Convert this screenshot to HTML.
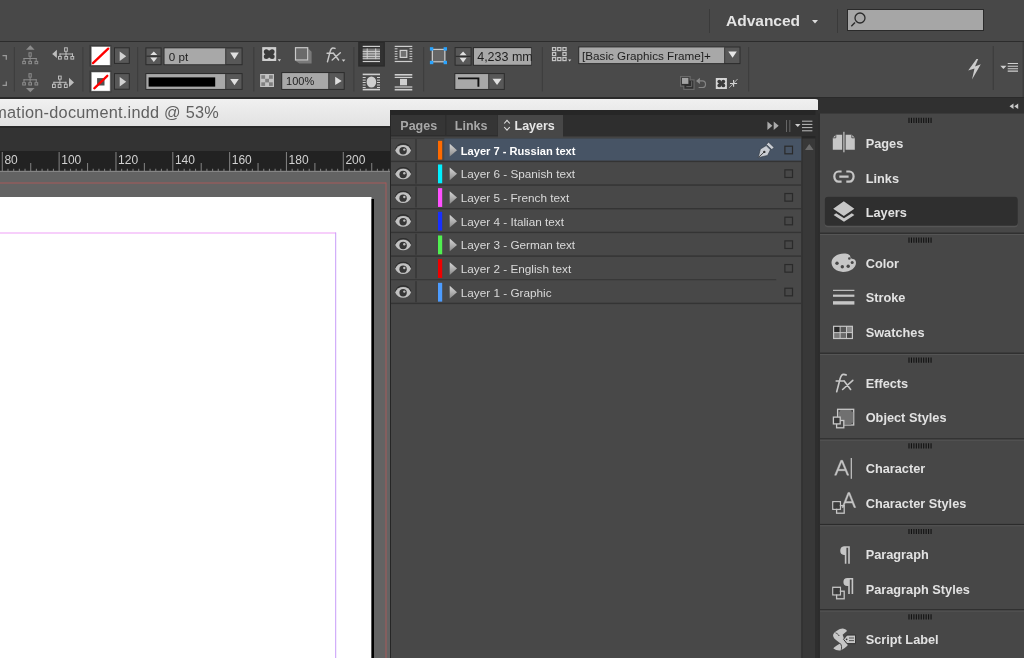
<!DOCTYPE html>
<html><head><meta charset="utf-8">
<style>
*{margin:0;padding:0}
html,body{width:1024px;height:658px;overflow:hidden;background:#484848}
svg{display:block;font-family:"Liberation Sans",sans-serif;will-change:transform}
</style></head><body>
<svg width="1024" height="658" viewBox="0 0 1024 658">
<defs>
<linearGradient id="tabg" x1="0" y1="0" x2="0" y2="1"><stop offset="0" stop-color="#f0f0f0"/><stop offset="1" stop-color="#e2e2e2"/></linearGradient>
<linearGradient id="trig" x1="0" y1="0" x2="0" y2="1"><stop offset="0" stop-color="#d8d8d8"/><stop offset="1" stop-color="#8a8a8a"/></linearGradient>
<g id="eye"><path d="M395.5 -0.8C398 -8.2 408.4 -8.2 410.8 -0.8" fill="none" stroke="#2c2c2c" stroke-width="1.1"/><path d="M395.2 0.2C398 -7 408.4 -7 411 0.2C408.4 7.2 398 7.2 395.2 0.2z" fill="#c2c2c2"/><circle cx="403.1" cy="0.6" r="3.7" fill="#363636"/><circle cx="404.3" cy="-0.6" r="1.2" fill="#bdbdbd"/></g></defs>
<g id="top">
<rect x="0" y="0" width="1024" height="41" fill="#484848"/>
<rect x="709" y="9" width="1" height="24" fill="#3a3a3a"/>
<text x="726" y="26" font-size="15.5" font-weight="bold" fill="#e4e4e4">Advanced</text>
<path d="M812 20h6l-3 3.5z" fill="#dcdcdc"/>
<rect x="837" y="9" width="1" height="24" fill="#3a3a3a"/>
<rect x="847.5" y="9.5" width="136" height="21" fill="#a6a6a6" stroke="#2a2a2a"/>
<circle cx="860" cy="18" r="5" fill="none" stroke="#2a2a2a" stroke-width="1.3"/>
<path d="M855 22.5L851.3 26.3" stroke="#2a2a2a" stroke-width="1.4"/>
<rect x="0" y="41" width="1024" height="1" fill="#2c2c2c"/>
</g>
<g id="tool">
<rect x="0" y="42" width="1024" height="55" fill="#4a4a4a"/>
<rect x="0" y="97" width="1024" height="2" fill="#2a2a2a"/>
<rect x="1022.5" y="42" width="1.5" height="55" fill="#3c3c3c"/>
<!-- separators -->
<g fill="#3e3e3e">
<rect x="13.8" y="47" width="1.2" height="44.5"/>
<rect x="82.3" y="47" width="1.2" height="44.5"/>
<rect x="137" y="47" width="1.2" height="44.5"/>
<rect x="253.2" y="47" width="1.2" height="44.5"/>
<rect x="353.3" y="47" width="1.2" height="44.5"/>
<rect x="423" y="47" width="1.2" height="44.5"/>
<rect x="541.8" y="47" width="1.2" height="44.5"/>
<rect x="748" y="47" width="1.2" height="44.5"/>
<rect x="992.7" y="46" width="1.2" height="44"/>
</g>
<!-- corner marks -->
<path d="M2.5 55.6h3.8v4.2M2.5 85.4h3.8v-4" fill="none" stroke="#9a9a9a" stroke-width="1.3"/>
<!-- hierarchy icon 1 (dim) -->
<g fill="#8c8c8c">
<path d="M26 49.8l4.3-4.5 4.3 4.5z"/>
<rect x="28.5" y="52.3" width="3.2" height="4.5"/>
<rect x="29.6" y="56.8" width="1" height="2"/>
<rect x="23.5" y="58" width="13.2" height="1"/>
<rect x="23.5" y="58" width="1" height="3"/><rect x="29.6" y="58" width="1" height="3"/><rect x="35.7" y="58" width="1" height="3"/>
<rect x="22.2" y="60.9" width="3.7" height="3.3"/><rect x="28.3" y="60.9" width="3.7" height="3.3"/><rect x="34.5" y="60.9" width="3.7" height="3.3"/>
<!-- icon 3 -->
<rect x="28.5" y="73.2" width="3.2" height="4.5"/>
<rect x="29.6" y="77.7" width="1" height="2"/>
<rect x="23.5" y="79.3" width="13.2" height="1"/>
<rect x="23.5" y="79.3" width="1" height="3"/><rect x="29.6" y="79.3" width="1" height="3"/><rect x="35.7" y="79.3" width="1" height="3"/>
<rect x="22.2" y="82.2" width="3.7" height="3.3"/><rect x="28.3" y="82.2" width="3.7" height="3.3"/><rect x="34.5" y="82.2" width="3.7" height="3.3"/>
<path d="M26 88l4.3 4.2 4.3-4.2z"/>
</g>
<g fill="#bdbdbd">
<path d="M52.2 53.9l4.7-4.1v8.2z"/>
<rect x="64.1" y="47.3" width="3.7" height="4.5"/>
<rect x="65.5" y="51.8" width="1" height="2"/>
<rect x="59.5" y="53.5" width="13.5" height="1"/>
<rect x="59.5" y="53.5" width="1" height="3"/><rect x="65.5" y="53.5" width="1" height="3"/><rect x="72" y="53.5" width="1" height="3"/>
<rect x="58" y="56" width="3.8" height="3.6"/><rect x="64.3" y="56" width="3.8" height="3.6"/><rect x="70.4" y="56" width="3.8" height="3.6"/>
<rect x="58" y="75.6" width="3.7" height="4.1"/>
<rect x="59.4" y="79.7" width="1" height="2"/>
<rect x="53.4" y="81.8" width="13" height="1"/>
<rect x="53.4" y="81.8" width="1" height="3"/><rect x="59.4" y="81.8" width="1" height="3"/><rect x="65.4" y="81.8" width="1" height="3"/>
<rect x="52" y="83.8" width="3.8" height="4.2"/><rect x="57.7" y="83.8" width="3.8" height="4.2"/><rect x="63.9" y="83.8" width="3.8" height="4.2"/>
<path d="M69 77.7l5 4.7-5 4.7z"/>
</g>
<g><rect x="29.50" y="53.30" width="1.20" height="2.50" fill="#4a4a4a"/><rect x="23.20" y="61.90" width="1.70" height="1.30" fill="#4a4a4a"/><rect x="29.30" y="61.90" width="1.70" height="1.30" fill="#4a4a4a"/><rect x="35.50" y="61.90" width="1.70" height="1.30" fill="#4a4a4a"/><rect x="29.50" y="74.20" width="1.20" height="2.50" fill="#4a4a4a"/><rect x="23.20" y="83.20" width="1.70" height="1.30" fill="#4a4a4a"/><rect x="29.30" y="83.20" width="1.70" height="1.30" fill="#4a4a4a"/><rect x="35.50" y="83.20" width="1.70" height="1.30" fill="#4a4a4a"/><rect x="65.10" y="48.30" width="1.70" height="2.50" fill="#4a4a4a"/><rect x="59.00" y="57.00" width="1.80" height="1.60" fill="#4a4a4a"/><rect x="65.30" y="57.00" width="1.80" height="1.60" fill="#4a4a4a"/><rect x="71.40" y="57.00" width="1.80" height="1.60" fill="#4a4a4a"/><rect x="59.00" y="76.60" width="1.70" height="2.10" fill="#4a4a4a"/><rect x="53.00" y="84.80" width="1.80" height="2.20" fill="#4a4a4a"/><rect x="58.70" y="84.80" width="1.80" height="2.20" fill="#4a4a4a"/><rect x="64.90" y="84.80" width="1.80" height="2.20" fill="#4a4a4a"/></g>
<!-- fill / stroke swatches -->
<rect x="89.3" y="44.9" width="22.2" height="21.7" fill="#3c3c3c"/>
<rect x="91" y="46.4" width="19.5" height="19" fill="#8a8a8a"/>
<rect x="91.8" y="46.9" width="18" height="18.1" fill="#fff"/>
<path d="M93 63.2L108.2 48.6" stroke="#f00" stroke-width="2.3" stroke-linecap="round"/>
<rect x="89.3" y="70.5" width="22.2" height="22" fill="#3c3c3c"/>
<rect x="91" y="71.9" width="19.5" height="19.4" fill="#8a8a8a"/>
<rect x="91.8" y="72.4" width="18" height="18.4" fill="#fff"/>
<rect x="97.1" y="78.1" width="7.4" height="7.4" fill="#505050"/>
<path d="M94.3 88.3L107.3 75.8" stroke="#f00" stroke-width="2.3" stroke-linecap="round"/>
<g>
<rect x="114.5" y="47.8" width="14.8" height="15.6" fill="#585858" stroke="#2c2c2c" stroke-width="1"/>
<path d="M119.7 51.4l6.5 4.75-6.5 4.75z" fill="#d2d2d2"/>
<rect x="114.5" y="73.6" width="14.8" height="15.6" fill="#585858" stroke="#2c2c2c" stroke-width="1"/>
<path d="M119.7 77.1l6.5 4.75-6.5 4.75z" fill="#d2d2d2"/>
</g>
<!-- stroke weight spinner + field -->
<rect x="145.9" y="47.9" width="15.2" height="16.8" fill="#585858" stroke="#2c2c2c"/>
<rect x="146.4" y="55.6" width="14.2" height="1.2" fill="#2e2e2e"/>
<path d="M150.3 55l3.5-3.5 3.5 3.5zM150.3 57.6l3.5 4.5 3.5-4.5z" fill="#e0e0e0"/>
<rect x="164.1" y="47.9" width="78" height="16.8" fill="#585858" stroke="#2c2c2c"/>
<rect x="164.6" y="48.4" width="60.6" height="15.8" fill="#a8a8a8"/>
<rect x="225.2" y="48.4" width="1.2" height="15.8" fill="#444"/>
<path d="M230.2 52.4h8.6l-4.3 6.8z" fill="#e0e0e0"/>
<text x="168.8" y="60.8" font-size="11.6" fill="#1e1e1e">0 pt</text>
<rect x="145.9" y="73.6" width="96.2" height="15.8" fill="#585858" stroke="#2c2c2c"/>
<rect x="146.4" y="74.1" width="78.8" height="14.8" fill="#a8a8a8"/>
<rect x="148.6" y="77.4" width="66.6" height="9.2" fill="#000"/>
<rect x="225.2" y="74.1" width="1.2" height="14.8" fill="#444"/>
<path d="M230.2 79h8.6l-4.3 6.3z" fill="#e0e0e0"/>
<!-- corner options / drop shadow / fx -->
<rect x="262.2" y="47.1" width="14" height="13.9" fill="#cfcfcf"/>
<g fill="#3a3a3a"><circle cx="266.3" cy="51.7" r="2.5"/><circle cx="272.1" cy="51.7" r="2.5"/><circle cx="266.3" cy="56.5" r="2.5"/><circle cx="272.1" cy="56.5" r="2.5"/><rect x="265.5" y="50.5" width="7.4" height="7.2"/></g>
<path d="M277.7 59.2h3.3l-1.65 2.3z" fill="#cfcfcf"/>
<path d="M308.3 48.5l3.3 3.3v11.7h-12.2l-4.5-2.9h13.4z" fill="#8a8a8a" opacity="0.75"/>
<rect x="294.9" y="47.1" width="13.4" height="13.5" fill="#cacaca"/>
<rect x="296.1" y="48.3" width="11" height="11.1" fill="#6a6a6a"/>
<g transform="translate(326.9 47.6) scale(0.8) translate(-836 -374)"><path d="M836.7 391.7C838 387 839 383 840 379C841 375.5 842 374.4 843.5 374.4C844.8 374.4 845.6 374.6 846.2 375M836.2 381H843.2M842.6 389.5L852.8 380.4M844 380.8L850.6 389.5" fill="none" stroke="#c8c8c8" stroke-width="1.8" stroke-linecap="round"/></g>
<path d="M341.7 59.6h3.7l-1.85 2.1z" fill="#cfcfcf"/>
<!-- transparency -->
<rect x="260.1" y="74" width="13.9" height="13" fill="#c2c2c2"/>
<g fill="#808080"><rect x="261.3" y="75.2" width="3.8" height="3.6"/><rect x="269" y="75.2" width="3.8" height="3.6"/><rect x="265.2" y="78.8" width="3.8" height="3.6"/><rect x="261.3" y="82.3" width="3.8" height="3.6"/><rect x="269" y="82.3" width="3.8" height="3.6"/></g>
<rect x="281.8" y="72.6" width="62.4" height="16.8" fill="#585858" stroke="#2c2c2c"/>
<rect x="282.3" y="73.1" width="46" height="15.8" fill="#a8a8a8"/>
<rect x="328.3" y="73.1" width="1.2" height="15.8" fill="#444"/>
<path d="M335.2 76.8l6.5 4.15-6.5 4.15z" fill="#e0e0e0"/>
<text x="286.1" y="85.1" font-size="11" fill="#1e1e1e">100%</text>
<!-- text wrap buttons -->
<rect x="358.2" y="42" width="26.7" height="24.6" fill="#2b2b2b"/>
<rect x="359.5" y="43" width="24.2" height="22.3" fill="#313131"/>
<g fill="#cfcfcf">
<rect x="362.7" y="45.8" width="17.3" height="1.2"/>
<rect x="362.7" y="60.9" width="17.3" height="1.2"/>
<rect x="362.7" y="48.5" width="17.3" height="10.6" fill="#7a7a7a"/>
<rect x="362.7" y="50.9" width="17.3" height="1"/><rect x="362.7" y="53.4" width="17.3" height="1"/><rect x="362.7" y="55.9" width="17.3" height="1"/><rect x="362.7" y="58.3" width="17.3" height="1"/>
<rect x="366.7" y="48.5" width="1" height="10.6"/><rect x="375.2" y="48.5" width="1" height="10.6"/>
<!-- bbox wrap -->
<rect x="394.7" y="45.8" width="17.6" height="1.2"/>
<rect x="394.7" y="60.9" width="17.6" height="1.2"/>
<rect x="394.7" y="48.3" width="2.8" height="1"/><rect x="394.7" y="50.9" width="2.8" height="1"/><rect x="394.7" y="53.4" width="2.8" height="1"/><rect x="394.7" y="55.9" width="2.8" height="1"/><rect x="394.7" y="58.3" width="2.8" height="1"/>
<rect x="409.5" y="48.3" width="2.8" height="1"/><rect x="409.5" y="50.9" width="2.8" height="1"/><rect x="409.5" y="53.4" width="2.8" height="1"/><rect x="409.5" y="55.9" width="2.8" height="1"/><rect x="409.5" y="58.3" width="2.8" height="1"/>
<rect x="399.6" y="49.8" width="7.8" height="8.2"/>
<rect x="400.8" y="51" width="5.4" height="5.8" fill="#707070"/>
<!-- object shape wrap -->
<rect x="362.7" y="73.6" width="17.3" height="1.6"/>
<rect x="362.7" y="88.8" width="17.3" height="1.6"/>
<rect x="362.7" y="77" width="3" height="1"/><rect x="362.7" y="79.6" width="3" height="1"/><rect x="362.7" y="82" width="3" height="1"/><rect x="362.7" y="84.5" width="3" height="1"/><rect x="362.7" y="87" width="3" height="1"/>
<rect x="377" y="77" width="3" height="1"/><rect x="377" y="79.6" width="3" height="1"/><rect x="377" y="82" width="3" height="1"/><rect x="377" y="84.5" width="3" height="1"/><rect x="377" y="87" width="3" height="1"/>
<ellipse cx="371.4" cy="82" rx="4.8" ry="5.6"/>
<!-- jump object -->
<rect x="394.7" y="74" width="17.6" height="1.6"/>
<rect x="394.7" y="76.8" width="17.6" height="1.2"/>
<rect x="394.7" y="86.4" width="17.6" height="1.2"/>
<rect x="394.7" y="88.9" width="17.6" height="1.6"/>
<rect x="400" y="78.9" width="7" height="6.4"/>
</g>
<!-- reference-point square -->
<rect x="431.7" y="48.8" width="13.8" height="13.6" fill="#c8c8c8"/>
<rect x="433" y="50" width="11.2" height="11.2" fill="#666"/>
<g fill="#2aa4ff"><rect x="429.9" y="47.2" width="3.4" height="3.4"/><rect x="443.6" y="47.2" width="3.4" height="3.4"/><rect x="429.9" y="60.8" width="3.4" height="3.4"/><rect x="443.6" y="60.8" width="3.4" height="3.4"/></g>
<!-- spinner + 4,233 field -->
<rect x="455.1" y="47.6" width="16" height="17.6" fill="#585858" stroke="#2c2c2c"/>
<rect x="455.6" y="55.8" width="15" height="1.2" fill="#2e2e2e"/>
<path d="M459.6 55.2l3.5-3.6 3.5 3.6zM459.6 57.8l3.5 4.6 3.5-4.6z" fill="#e0e0e0"/>
<rect x="473.4" y="47.6" width="57.7" height="17.6" fill="#585858" stroke="#2c2c2c"/>
<svg x="473.9" y="48.1" width="57.2" height="16.6"><rect width="57.2" height="16.6" fill="#a8a8a8"/><text x="3.3" y="13.3" font-size="12.5" fill="#1e1e1e">4,233 mm</text></svg>
<!-- corner shape dropdown -->
<rect x="454.9" y="73.6" width="49.4" height="15.8" fill="#585858" stroke="#2c2c2c"/>
<rect x="455.4" y="74.1" width="32.8" height="14.8" fill="#a8a8a8"/>
<rect x="488.2" y="74.1" width="1.2" height="14.8" fill="#444"/>
<path d="M458 78.4h20.4v8.3" fill="none" stroke="#111" stroke-width="1.9"/>
<path d="M492.5 78.8h9.1l-4.55 6.2z" fill="#e0e0e0"/>
<!-- object style -->
<g fill="none" stroke="#c4c4c4" stroke-width="1.2">
<rect x="552.5" y="47.6" width="3.2" height="3"/><rect x="557.7" y="47.6" width="3.2" height="3"/><rect x="562.9" y="47.6" width="3.2" height="3"/>
<rect x="552.5" y="52.6" width="3.2" height="3"/><rect x="562.9" y="52.6" width="3.2" height="3"/>
<rect x="552.5" y="57.6" width="3.2" height="3"/><rect x="557.7" y="57.6" width="3.2" height="3"/><rect x="562.9" y="57.6" width="3.2" height="3"/>
</g>
<path d="M568 59.6h3.3l-1.65 2z" fill="#cfcfcf"/>
<rect x="578.8" y="47" width="161.2" height="16.6" fill="#585858" stroke="#2c2c2c"/>
<rect x="579.3" y="47.5" width="144.7" height="15.6" fill="#a8a8a8"/>
<rect x="724" y="47.5" width="1.2" height="15.6" fill="#444"/>
<path d="M728.3 51.6h8.5l-4.25 6.2z" fill="#e6e6e6"/>
<text x="582" y="59.6" font-size="11.7" fill="#1e1e1e">[Basic Graphics Frame]+</text>
<!-- clear overrides -->
<path d="M680 76h10.7v3.2h3.9V90h-11.4v-3.3H680z" fill="#686868"/>
<path d="M681.2 77.2h8.3v3.2h3.9v8.4h-9v-3.3h-3.2z" fill="#2e2e2e"/>
<rect x="682" y="77.9" width="6.4" height="6" fill="#a2a2a2"/>
<path d="M686.3 86.6h5.4v-5.4" fill="none" stroke="#6a6a6a" stroke-width="1"/>
<path d="M696 81l3.9-3.2v6.2z" fill="#8c8c8c"/>
<path d="M699.2 80.9h3.2a3.1 3.3 0 0 1 0 6.6h-3.8" fill="none" stroke="#858585" stroke-width="1.2"/>
<rect x="715.8" y="78" width="11.1" height="11" fill="#d6d6d6"/>
<g fill="#3a3a3a"><circle cx="719.3" cy="81.6" r="1.9"/><circle cx="723.3" cy="81.6" r="1.9"/><circle cx="719.3" cy="85.4" r="1.9"/><circle cx="723.3" cy="85.4" r="1.9"/><rect x="719" y="81.5" width="4.6" height="4"/></g>
<path d="M730 83.5h7.1M733.6 80v6.7" stroke="#d8d8d8" stroke-width="1.1"/>
<path d="M729.2 87.8L737.6 79" stroke="#bdbdbd" stroke-width="0.9"/>
<!-- lightning -->
<path d="M976.5 59l-8.3 11.5 6.3-2-2.5 11 8.8-15.2-5.8 2.2 3.2-7.5z" fill="#cccccc"/>
<!-- menu -->
<path d="M1000.3 65.8h6.2l-3.1 3.2z" fill="#d0d0d0"/>
<path d="M1007.7 63.5h10.3M1007.7 66.2h10.3M1007.7 68.7h10.3M1007.7 71.1h10.3" stroke="#d0d0d0" stroke-width="1.1"/>
</g>

<g id="doc">
<path d="M0 99H815a4 4 0 0 1 4 4V126H0z" fill="url(#tabg)"/>
<text x="219" y="118.2" font-size="16.3" fill="#606060" text-anchor="end" letter-spacing="0.25">information-document.indd @ 53%</text>
<rect x="0" y="126" width="390" height="2" fill="#282828"/>
<rect x="0" y="128" width="390" height="23" fill="#333"/>
<rect x="0" y="151" width="390" height="20" fill="#222"/>
<path d="M2.30 152V171M7.98 168.8V171M13.67 168.8V171M19.35 168.8V171M25.03 168.8V171M30.72 163V171M36.40 168.8V171M42.08 168.8V171M47.77 168.8V171M53.45 168.8V171M59.13 152V171M64.82 168.8V171M70.50 168.8V171M76.18 168.8V171M81.87 168.8V171M87.55 163V171M93.23 168.8V171M98.92 168.8V171M104.60 168.8V171M110.28 168.8V171M115.97 152V171M121.65 168.8V171M127.33 168.8V171M133.02 168.8V171M138.70 168.8V171M144.39 163V171M150.07 168.8V171M155.75 168.8V171M161.44 168.8V171M167.12 168.8V171M172.80 152V171M178.49 168.8V171M184.17 168.8V171M189.85 168.8V171M195.54 168.8V171M201.22 163V171M206.90 168.8V171M212.59 168.8V171M218.27 168.8V171M223.95 168.8V171M229.64 152V171M235.32 168.8V171M241.00 168.8V171M246.69 168.8V171M252.37 168.8V171M258.05 163V171M263.74 168.8V171M269.42 168.8V171M275.10 168.8V171M280.79 168.8V171M286.47 152V171M292.15 168.8V171M297.84 168.8V171M303.52 168.8V171M309.20 168.8V171M314.89 163V171M320.57 168.8V171M326.25 168.8V171M331.94 168.8V171M337.62 168.8V171M343.30 152V171M348.99 168.8V171M354.67 168.8V171M360.35 168.8V171M366.04 168.8V171M371.72 163V171M377.40 168.8V171M383.09 168.8V171M388.77 168.8V171" stroke="#7c7c7c" stroke-width="1.1"/>
<rect x="0" y="170.8" width="390" height="1.2" fill="#858585"/>
<g font-size="12" fill="#d2d2d2"><text x="4.40" y="163.8">80</text><text x="61.23" y="163.8">100</text><text x="118.07" y="163.8">120</text><text x="174.90" y="163.8">140</text><text x="231.74" y="163.8">160</text><text x="288.57" y="163.8">180</text><text x="345.40" y="163.8">200</text></g>
<rect x="0" y="172" width="390" height="486" fill="#636363"/>
<rect x="0" y="182.5" width="386" height="1" fill="#a85a5a"/>
<rect x="385.5" y="182.5" width="1" height="476" fill="#a85a5a"/>
<rect x="0" y="197" width="371.5" height="461" fill="#fff"/>
<rect x="371.5" y="199" width="2.5" height="459" fill="#000"/>
<rect x="0" y="232.5" width="336" height="1" fill="#f0a0f8"/>
<rect x="335.2" y="232.5" width="1" height="426" fill="#c89cf8"/>
</g>
<g id="panel">
<rect x="390" y="110" width="428" height="548" fill="#262626"/>
<rect x="391" y="115" width="426" height="21" fill="#2e2e2e"/>
<rect x="391" y="115" width="54" height="20" fill="#353535"/>
<rect x="446.5" y="115" width="51" height="20" fill="#353535"/>
<rect x="391" y="136.3" width="410.5" height="2.2" fill="#444"/>
<rect x="498" y="115" width="65" height="23" fill="#474747"/>
<g font-size="12.5" font-weight="bold"><text x="400.3" y="130.3" fill="#a8a8a8">Pages</text><text x="454.8" y="130.3" fill="#a8a8a8">Links</text><text x="514.5" y="130.3" fill="#e6e6e6">Layers</text></g>
<path d="M504.2 123.5l2.8-3.2 2.8 3.2M504.2 127l2.8 3.2 2.8-3.2" fill="none" stroke="#ddd" stroke-width="1.1"/>
<rect x="391" y="138.5" width="410.5" height="519.5" fill="#484848"/>
<rect x="444.3" y="138.50" width="357.2" height="22.3" fill="#475465"/>
<rect x="391" y="160.70" width="410.5" height="1.4" fill="#343434"/>
<rect x="415.3" y="139.10" width="1.4" height="21" fill="#363636"/>
<rect x="438" y="140.80" width="4.2" height="18.8" fill="#ff6a00"/>
<use href="#eye" x="0" y="150.20"/>
<path d="M449.7 143.80L457 150.20L449.7 156.60z" fill="url(#trig)"/>
<text x="460.8" y="154.50" font-size="11.1" font-weight="bold" fill="#fff">Layer 7 - Russian text</text>
<rect x="784.9" y="146.20" width="7.6" height="7.6" fill="none" stroke="#2a2a2a" stroke-width="1.2"/>
<rect x="391" y="184.37" width="410.5" height="1.4" fill="#343434"/>
<rect x="415.3" y="162.77" width="1.4" height="21" fill="#363636"/>
<rect x="438" y="164.47" width="4.2" height="18.8" fill="#00f0ff"/>
<use href="#eye" x="0" y="173.87"/>
<path d="M449.7 167.47L457 173.87L449.7 180.27z" fill="url(#trig)"/>
<text x="460.8" y="178.37" font-size="11.75" fill="#dadada">Layer 6 - Spanish text</text>
<rect x="784.9" y="169.87" width="7.6" height="7.6" fill="none" stroke="#2a2a2a" stroke-width="1.2"/>
<rect x="391" y="208.04" width="410.5" height="1.4" fill="#343434"/>
<rect x="415.3" y="186.44" width="1.4" height="21" fill="#363636"/>
<rect x="438" y="188.14" width="4.2" height="18.8" fill="#ff50ff"/>
<use href="#eye" x="0" y="197.54"/>
<path d="M449.7 191.14L457 197.54L449.7 203.94z" fill="url(#trig)"/>
<text x="460.8" y="202.04" font-size="11.75" fill="#dadada">Layer 5 - French text</text>
<rect x="784.9" y="193.54" width="7.6" height="7.6" fill="none" stroke="#2a2a2a" stroke-width="1.2"/>
<rect x="391" y="231.71" width="410.5" height="1.4" fill="#343434"/>
<rect x="415.3" y="210.11" width="1.4" height="21" fill="#363636"/>
<rect x="438" y="211.81" width="4.2" height="18.8" fill="#1830ff"/>
<use href="#eye" x="0" y="221.21"/>
<path d="M449.7 214.81L457 221.21L449.7 227.61z" fill="url(#trig)"/>
<text x="460.8" y="225.71" font-size="11.75" fill="#dadada">Layer 4 - Italian text</text>
<rect x="784.9" y="217.21" width="7.6" height="7.6" fill="none" stroke="#2a2a2a" stroke-width="1.2"/>
<rect x="391" y="255.38" width="410.5" height="1.4" fill="#343434"/>
<rect x="415.3" y="233.78" width="1.4" height="21" fill="#363636"/>
<rect x="438" y="235.48" width="4.2" height="18.8" fill="#50f050"/>
<use href="#eye" x="0" y="244.88"/>
<path d="M449.7 238.48L457 244.88L449.7 251.28z" fill="url(#trig)"/>
<text x="460.8" y="249.38" font-size="11.75" fill="#dadada">Layer 3 - German text</text>
<rect x="784.9" y="240.88" width="7.6" height="7.6" fill="none" stroke="#2a2a2a" stroke-width="1.2"/>
<rect x="391" y="279.15" width="385.2" height="1.1" fill="#363636"/>
<rect x="415.3" y="257.45" width="1.4" height="21" fill="#363636"/>
<rect x="438" y="259.15" width="4.2" height="18.8" fill="#f00000"/>
<use href="#eye" x="0" y="268.55"/>
<path d="M449.7 262.15L457 268.55L449.7 274.95z" fill="url(#trig)"/>
<text x="460.8" y="273.05" font-size="11.75" fill="#dadada">Layer 2 - English text</text>
<rect x="784.9" y="264.55" width="7.6" height="7.6" fill="none" stroke="#2a2a2a" stroke-width="1.2"/>
<rect x="391" y="302.72" width="410.5" height="1.4" fill="#343434"/>
<rect x="415.3" y="281.12" width="1.4" height="21" fill="#363636"/>
<rect x="438" y="282.82" width="4.2" height="18.8" fill="#4c9cff"/>
<use href="#eye" x="0" y="292.22"/>
<path d="M449.7 285.82L457 292.22L449.7 298.62z" fill="url(#trig)"/>
<text x="460.8" y="296.72" font-size="11.75" fill="#dadada">Layer 1 - Graphic</text>
<rect x="784.9" y="288.22" width="7.6" height="7.6" fill="none" stroke="#2a2a2a" stroke-width="1.2"/>
<rect x="801.5" y="138.5" width="1" height="519.5" fill="#333"/>
<rect x="802.5" y="138.5" width="13" height="519.5" fill="#383838"/>
<rect x="815.5" y="110" width="4.5" height="548" fill="#2e2e2e"/>
<path d="M805 150h8.6l-4.3-6z" fill="#6a6a6a"/>
<path d="M767.4 121.6l5 4.2-5 4.2zM773.7 121.6l5 4.2-5 4.2z" fill="#aaa"/>
<rect x="786" y="120" width="1" height="12" fill="#666"/><rect x="789.3" y="120" width="1" height="12" fill="#666"/>
<path d="M795 124h5.5l-2.75 3z" fill="#ccc"/>
<path d="M802 121.2h10.4M802 124.4h10.4M802 127.6h10.4M802 130.8h10.4" stroke="#c4c4c4" stroke-width="0.95"/>
<path d="M758.2 157.7L760.4 149L766.2 145.6L770.4 149.8L767.6 155.4z" fill="#c9cdd3" stroke="#2e3640" stroke-width="0.6"/>
<path d="M766.4 144.4L768.6 142.2L774 147.4L771.8 149.6z" fill="#c9cdd3" stroke="#2e3640" stroke-width="0.6"/>
<path d="M758.9 157L764.3 151.9" stroke="#333" stroke-width="0.9"/><circle cx="764.3" cy="151.9" r="1.2" fill="#333"/>
</g>
<g id="dock">
<rect x="818" y="98" width="206" height="560" fill="#2c2c2c"/>
<rect x="818" y="98" width="206" height="15.5" fill="#303030"/>
<path d="M1009.5 106.3l4-2.8v5.6zM1014.2 106.3l4-2.8v5.6z" fill="#c8c8c8"/>
<rect x="820" y="113.5" width="204" height="544.5" fill="#474747"/>
<path d="M909.00 117.80v5.2M911.45 117.80v5.2M913.90 117.80v5.2M916.35 117.80v5.2M918.80 117.80v5.2M921.25 117.80v5.2M923.70 117.80v5.2M926.15 117.80v5.2M928.60 117.80v5.2M931.05 117.80v5.2" stroke="#111" stroke-width="1.1"/>
<rect x="820" y="232.60" width="204" height="1.3" fill="#2b2b2b"/>
<rect x="820" y="233.90" width="204" height="1.1" fill="#555"/>
<path d="M909.00 237.60v5.2M911.45 237.60v5.2M913.90 237.60v5.2M916.35 237.60v5.2M918.80 237.60v5.2M921.25 237.60v5.2M923.70 237.60v5.2M926.15 237.60v5.2M928.60 237.60v5.2M931.05 237.60v5.2" stroke="#111" stroke-width="1.1"/>
<rect x="820" y="352.60" width="204" height="1.3" fill="#2b2b2b"/>
<rect x="820" y="353.90" width="204" height="1.1" fill="#555"/>
<path d="M909.00 357.60v5.2M911.45 357.60v5.2M913.90 357.60v5.2M916.35 357.60v5.2M918.80 357.60v5.2M921.25 357.60v5.2M923.70 357.60v5.2M926.15 357.60v5.2M928.60 357.60v5.2M931.05 357.60v5.2" stroke="#111" stroke-width="1.1"/>
<rect x="820" y="438.30" width="204" height="1.3" fill="#2b2b2b"/>
<rect x="820" y="439.60" width="204" height="1.1" fill="#555"/>
<path d="M909.00 443.30v5.2M911.45 443.30v5.2M913.90 443.30v5.2M916.35 443.30v5.2M918.80 443.30v5.2M921.25 443.30v5.2M923.70 443.30v5.2M926.15 443.30v5.2M928.60 443.30v5.2M931.05 443.30v5.2" stroke="#111" stroke-width="1.1"/>
<rect x="820" y="523.90" width="204" height="1.3" fill="#2b2b2b"/>
<rect x="820" y="525.20" width="204" height="1.1" fill="#555"/>
<path d="M909.00 528.90v5.2M911.45 528.90v5.2M913.90 528.90v5.2M916.35 528.90v5.2M918.80 528.90v5.2M921.25 528.90v5.2M923.70 528.90v5.2M926.15 528.90v5.2M928.60 528.90v5.2M931.05 528.90v5.2" stroke="#111" stroke-width="1.1"/>
<rect x="820" y="609.20" width="204" height="1.3" fill="#2b2b2b"/>
<rect x="820" y="610.50" width="204" height="1.1" fill="#555"/>
<path d="M909.00 614.20v5.2M911.45 614.20v5.2M913.90 614.20v5.2M916.35 614.20v5.2M918.80 614.20v5.2M921.25 614.20v5.2M923.70 614.20v5.2M926.15 614.20v5.2M928.60 614.20v5.2M931.05 614.20v5.2" stroke="#111" stroke-width="1.1"/>
<rect x="824.8" y="196.8" width="193" height="30.4" rx="3" fill="#555"/>
<rect x="824.8" y="196.8" width="193" height="28.9" rx="3" fill="#2f2f2f"/>
<g font-size="12.75" font-weight="bold" fill="#e2e2e2">
<text x="865.7" y="147.90">Pages</text>
<text x="865.7" y="182.50">Links</text>
<text x="865.7" y="217.10">Layers</text>
<text x="865.7" y="267.70">Color</text>
<text x="865.7" y="302.30">Stroke</text>
<text x="865.7" y="336.90">Swatches</text>
<text x="865.7" y="387.70">Effects</text>
<text x="865.7" y="422.30">Object Styles</text>
<text x="865.7" y="473.40">Character</text>
<text x="865.7" y="508.00">Character Styles</text>
<text x="865.7" y="559.00">Paragraph</text>
<text x="865.7" y="593.60">Paragraph Styles</text>
<text x="865.7" y="644.30">Script Label</text>
</g>
<g fill="#c6c6c6">
<!-- pages -->
<path d="M832.8 137.8l3-3h6.6v15h-9.6z M845.4 134.8h6.4l3 3v12h-9.4z"/>
<path d="M832.8 137.8h3v-3M854.8 137.8h-3v-3" fill="none" stroke="#3a3a3a" stroke-width="0.8"/>
<rect x="842.4" y="131.8" width="3" height="20.5" fill="#474747"/>
<rect x="843.3" y="131.8" width="1.2" height="20.5"/>
<!-- links -->
<path d="M841.6 171.5h-3a4.3 5.1 0 0 0 0 10.2h3M846.3 171.5h3a4.3 5.1 0 0 1 0 10.2h-3M839.3 176.6h9.3" fill="none" stroke="#c6c6c6" stroke-width="2.2"/>
<!-- layers -->
<path d="M836.2 213.3l7.8 5 7.8-5 2.6 1.7-10.4 6.8-10.4-6.8z"/>
<path d="M831.6 208.7L843.8 200.3L856 208.7L843.8 217.3z" fill="#2a2a2a"/><path d="M833.2 208.7L843.8 201.3L854.4 208.7L843.8 216z"/>
<!-- color palette -->
<path d="M844 253.6c-7 0-12.5 4-12.5 9 0 5 4.8 9.3 11.5 9.3 7.8 0 13-4.2 13-9.2 0-2.5-1.3-3.5-3.3-3.8-1.6-.3-2.4-.8-2.4-2.1 0-1.8-2.3-3.2-6.3-3.2z"/>
<g fill="#474747"><circle cx="837" cy="263.3" r="1.7"/><circle cx="842.3" cy="266.7" r="1.7"/><circle cx="848.2" cy="266.2" r="1.7"/><circle cx="852.2" cy="262.6" r="1.5"/><circle cx="849.3" cy="258.5" r="1.3"/></g>
<!-- stroke -->
<rect x="833" y="289.8" width="21.4" height="1.1"/>
<rect x="833" y="294.6" width="21.4" height="2.2"/>
<rect x="833" y="301.2" width="21.4" height="3.4"/>
<!-- swatches -->
<rect x="833" y="325.7" width="20" height="13.4"/>
<rect x="834.2" y="326.9" width="5.4" height="5.2" fill="#2a2a2a"/>
<rect x="840.6" y="326.9" width="5.4" height="5.2" fill="#555"/>
<rect x="847" y="326.9" width="4.8" height="5.2" fill="#888"/>
<rect x="834.2" y="333.1" width="5.4" height="4.8" fill="#7a7a7a"/>
<rect x="840.6" y="333.1" width="5.4" height="4.8" fill="#6a6a6a"/>
<rect x="847" y="333.1" width="4.8" height="4.8" fill="#444"/>
<!-- fx -->
<path id="fxp" d="M836.7 391.7C838 387 839 383 840 379C841 375.5 842 374.4 843.5 374.4C844.8 374.4 845.6 374.6 846.2 375M836.2 381H843.2M842.6 389.5L852.8 380.4M844 380.8L850.6 389.5" fill="none" stroke="#c8c8c8" stroke-width="1.6" stroke-linecap="round"/>
<!-- object styles -->
<rect x="837.6" y="409.3" width="16.1" height="15.7" fill="none" stroke="#c8c8c8" stroke-width="1.3"/>
<path d="M840.3 410h10.8a2.2 2.2 0 0 0 2.2 2.2v10.3a2.2 2.2 0 0 0-2.2 2.2h-10.8a2.2 2.2 0 0 0-2.2-2.2v-10.3a2.2 2.2 0 0 0 2.2-2.2z" fill="#707070"/>
<rect x="836.6" y="420.5" width="7.2" height="7.3" fill="#474747" stroke="#c8c8c8" stroke-width="1.3"/>
<rect x="833.4" y="417.1" width="6.8" height="6.8" fill="#383838" stroke="#c8c8c8" stroke-width="1.3"/>
<!-- character -->
<path d="M834.6 475.2l6.2-14.9h1.8l6.2 14.9h-1.7l-1.8-4.5h-7.2l-1.8 4.5zM838.7 469.3h6l-3-7.4z" stroke="#c6c6c6" stroke-width="0.45"/>
<rect x="850.7" y="458" width="1.2" height="20.8"/>
<!-- character styles -->
<path d="M842 507.5l6-15.1h1.7l6 15.1h-1.7l-1.8-4.5h-7l-1.8 4.5zM846 501.6h5.8l-2.9-7.4z" stroke="#c6c6c6" stroke-width="0.45"/>
<rect x="832.8" y="501.7" width="7.6" height="7.6" fill="none" stroke="#c6c6c6" stroke-width="1.3"/>
<rect x="836.6" y="505.6" width="7.6" height="7.6" fill="none" stroke="#c6c6c6" stroke-width="1.3"/>
<rect x="833.5" y="502.4" width="6.2" height="6.2" fill="#3a3a3a"/>
<!-- paragraph -->
<path d="M849.8 546.3v17.5h-1.6v-16h-1.8v16h-1.6V555h-0.8a4.4 4.4 0 0 1 0-8.7z"/>
<!-- paragraph styles -->
<path d="M853.2 578v16h-1.6v-14.5h-1.8v14.5h-1.6v-8h-0.8a4 4 0 0 1 0-8z"/>
<rect x="832.8" y="587.3" width="7.6" height="7.6" fill="none" stroke="#c6c6c6" stroke-width="1.3"/>
<rect x="836.6" y="591.2" width="7.6" height="7.6" fill="none" stroke="#c6c6c6" stroke-width="1.3"/>
<rect x="833.5" y="588" width="6.2" height="6.2" fill="#3a3a3a"/>
<!-- script label -->
<path d="M836.9 630.8C839 629.5 841 628.6 842.4 628.6C844.5 628.6 846 629.5 847 630.9C845.5 632.3 843.8 633.6 842.6 634.8C843.3 636.5 844 638.5 844.5 640.5C845.5 642.2 846.8 643.8 847.9 645C846 647.5 843 649.5 840.2 650.4C838 650.8 835.2 649.8 833.3 648.2C835 646.5 837.5 644.8 840.5 643.5C838.5 641.5 836 640 834.3 638.4C833.2 637 832.8 635.5 833.3 634.3C834 632.8 835.3 631.6 836.9 630.8z"/>
<path d="M835.5 632.8C837 633.5 838.5 634.5 839.2 636M840.5 643.5C841.5 645.5 842 647.5 841.2 649.8" fill="none" stroke="#3a3a3a" stroke-width="0.9"/>
<path d="M843.5 639.3L847 635.1H855.5V643.6H847z" stroke="#2a2a2a" stroke-width="0.9"/>
<circle cx="846.6" cy="639.3" r="0.9" fill="#333"/>
<rect x="849" y="637.5" width="5" height="1" fill="#555"/><rect x="849" y="640.1" width="5" height="1" fill="#555"/>
</g>

</g>
</svg>
</body></html>
